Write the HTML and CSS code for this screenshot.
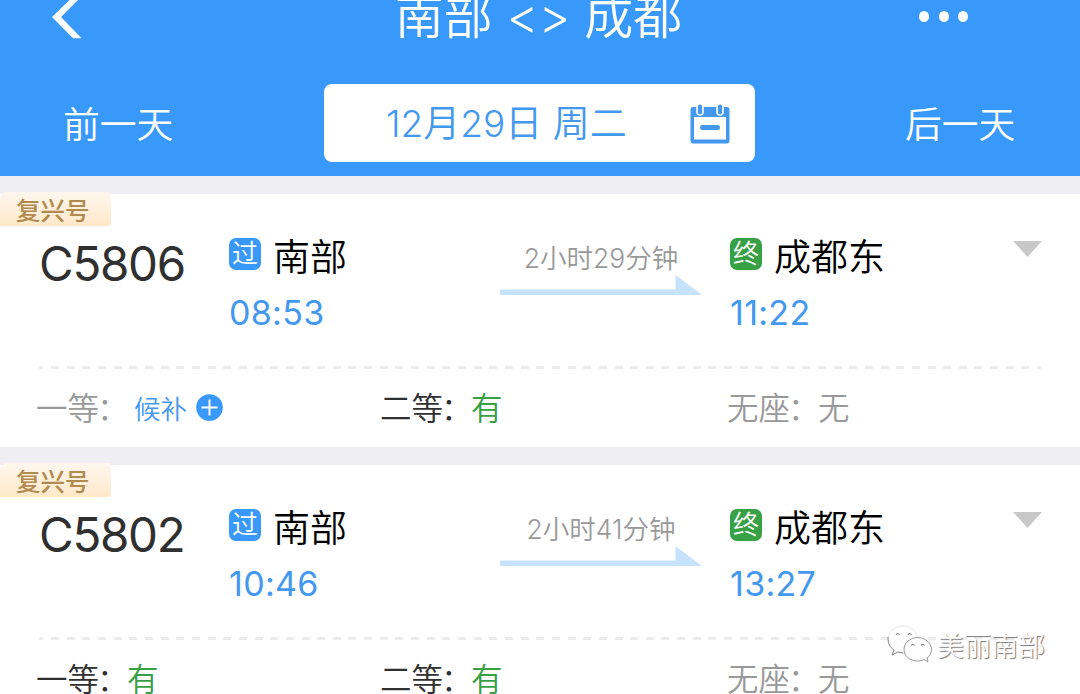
FILE: index.html
```html
<!DOCTYPE html>
<html lang="zh-CN">
<head>
    <meta charset="UTF-8">
    <meta name="viewport" content="width=device-width, initial-scale=1.0">
    <title>南部 - 成都</title>
    <link rel="stylesheet" href="styles.css">
</head>
<body>
    <header class="header">
        <div class="title-bar">
            <svg class="back" width="34" height="40" viewBox="0 0 34 40">
                <path d="M19.500 0H28L11 17L31.500 38.300H23L2 17Z" fill="#fff"/>
            </svg>
            <h1 class="title">南部 &lt;&gt; 成都</h1>
            <div class="more"><i></i><i></i><i></i></div>
        </div>
        <div class="date-bar">
            <span class="day">前一天</span>
            <div class="date-box">
                <span class="date">12月29日 周二</span>
                <svg class="calendar" width="40" height="40" viewBox="0 0 40 40">
                    <path fill="#4398f0" fill-rule="evenodd" d="M3 3H37Q39.5 3 39.5 6V36Q39.5 39.500 37 39.500H3Q.5 39.500 .5 36V6Q.5 3 3 3ZM4 13V35.500H36V13Z"/>
                    <path d="M10 3V8M30 3V8" stroke="#fff" stroke-width="7.500" stroke-linecap="round"/>
                    <path d="M10 2.500V8.500M30 2.500V8.500" stroke="#4398f0" stroke-width="4.200" stroke-linecap="round"/>
                    <path d="M12.500 23.500H27.500" stroke="#4398f0" stroke-width="5" stroke-linecap="round"/>
                </svg>
            </div>
            <span class="day">后一天</span>
        </div>
    </header>

    <main class="list">
        <section class="card">
            <span class="tag">复兴号</span>
            <div class="trip">
                <div class="train">C5806</div>
                <div class="stop">
                    <div class="station"><b class="badge pass">过</b>南部</div>
                    <div class="time">08:53</div>
                </div>
                <div class="duration">
                    <span>2小时29分钟</span>
                    <svg width="202" height="20" viewBox="0 0 202 20"><path d="M0 14.500H175.500V0L202 20H0Z" fill="#c7e2ff"/></svg>
                </div>
                <div class="stop">
                    <div class="station"><b class="badge end">终</b>成都东</div>
                    <div class="time">11:22</div>
                </div>
                <i class="toggle"></i>
            </div>
            <div class="seats">
                <div class="seat muted"><span class="label">一等<i>：</i></span><span class="waitlist">候补</span>
                    <svg class="plus" width="27" height="27" viewBox="0 0 27 27"><circle cx="13.500" cy="13.500" r="13.300" fill="#3899fb"/><path d="M5.500 13.500H21.500M13.500 5.500V21.500" stroke="#fff" stroke-width="2"/></svg>
                </div>
                <div class="seat"><span class="label">二等<i>：</i></span><span class="yes">有</span></div>
                <div class="seat muted"><span class="label">无座<i>：</i></span><span>无</span></div>
            </div>
        </section>

        <section class="card">
            <span class="tag">复兴号</span>
            <div class="trip">
                <div class="train">C5802</div>
                <div class="stop">
                    <div class="station"><b class="badge pass">过</b>南部</div>
                    <div class="time">10:46</div>
                </div>
                <div class="duration">
                    <span>2小时41分钟</span>
                    <svg width="202" height="20" viewBox="0 0 202 20"><path d="M0 14.500H175.500V0L202 20H0Z" fill="#c7e2ff"/></svg>
                </div>
                <div class="stop">
                    <div class="station"><b class="badge end">终</b>成都东</div>
                    <div class="time">13:27</div>
                </div>
                <i class="toggle"></i>
            </div>
            <div class="seats">
                <div class="seat"><span class="label">一等<i>：</i></span><span class="yes">有</span></div>
                <div class="seat"><span class="label">二等<i>：</i></span><span class="yes">有</span></div>
                <div class="seat muted"><span class="label">无座<i>：</i></span><span>无</span></div>
            </div>
        </section>
    </main>

    <div class="watermark">
        <svg width="46" height="40" viewBox="0 0 46 40">
            <g fill="#fff" stroke-width="1">
                <path d="M16 1C7 1 1 7 1 14.500C1 19 3.300 22.500 7 25L5 30L11 27C14 28.300 20 28 22 27C32 23 33 13 28 6.500C25 3 21 1 16 1Z" stroke="#e4e4e4"/>
                <path d="M1 12C1 19 3 22.500 7 25L5 30L11 27L16 28" fill="none" stroke="#888"/>
                <path d="M30.500 12.500C23 12.500 17 18 17 24.500C17 31 23 36 30.500 36C33 36 35 35.500 37 34.500L41 37L40 33C43 31 44.500 28 44.500 24.500C44.500 18 38 12.500 30.500 12.500Z" stroke="#999"/>
            </g>
            <path d="M9 10Q10.500 7 12.500 10M21 10Q22.500 7 24.500 10M24 20.500Q25.500 18 27.500 20.500M34 20.500Q35.500 18 37.500 20.500" fill="none" stroke="#888" stroke-width="1.200"/>
        </svg>
        <span>美丽南部</span>
    </div>
</body>
</html>
```
FILE: styles.css
```css
* {
    box-sizing: border-box;
}

body {
    margin: 0;
    height: 694px;
    overflow: hidden;
    position: relative;
    background: #eeeef3;
    color: #303030;
    font-family: Inter, "Noto Sans CJK SC", sans-serif;
    font-weight: 350;
}

.header {
    height: 176px;
    background: #3899fb;
    color: #fff;
    overflow: hidden;
}

.title-bar {
    height: 84px;
    padding: 0 112px 0 50px;
    display: flex;
    justify-content: space-between;
    align-items: flex-start;
}

.title {
    margin: -18px 0 0 74px;
    font-size: 49px;
    line-height: 70px;
    font-weight: 350;
    white-space: nowrap;
}

.more {
    display: flex;
    gap: 9.5px;
    padding-top: 11px;
}

.more i {
    width: 10px;
    height: 11px;
    border-radius: 50%;
    background: #fff;
}

.date-bar {
    display: flex;
    justify-content: space-between;
    align-items: center;
    padding: 0 64px 0 63px;
}

.day {
    width: 111px;
    height: 78px;
    font-size: 36.8px;
    line-height: 81px;
    white-space: nowrap;
}

.date-box {
    width: 431px;
    height: 78px;
    padding: 0 25px 0 62px;
    display: flex;
    align-items: center;
    justify-content: space-between;
    background: #fff;
    border-radius: 8px;
}

.date {
    margin-top: -4px;
    color: #4398f0;
    font-size: 37px;
    white-space: nowrap;
}

.calendar {
    margin-top: 2px;
}

.list {
    padding-top: 18px;
}

.card {
    position: relative;
    height: 253px;
    margin-bottom: 18px;
    background: #fff;
}

.card:last-child {
    height: 229px;
    margin-bottom: 0;
}

.tag {
    position: absolute;
    left: 0;
    top: -2px;
    width: 111px;
    height: 34px;
    padding-left: 16px;
    border-radius: 8px 3px 3px 0;
    background: linear-gradient(#fff7ef, #ffe8c8);
    color: #b18a4d;
    font-size: 24.5px;
    font-weight: 500;
    line-height: 38px;
}

.trip {
    height: 172px;
    padding: 40px 38px 0 39px;
    display: grid;
    grid-template-columns: 190px 271px 230px 283px 29px;
    align-items: start;
}

.train {
    padding-top: 1px;
    font-size: 47.5px;
    line-height: 58px;
    font-weight: 400;
    letter-spacing: -1.3px;
}

.station {
    display: flex;
    align-items: center;
    height: 46px;
    color: #000;
    font-size: 37px;
    line-height: 46px;
    padding-top: 2px;
    white-space: nowrap;
}

.badge {
    width: 32px;
    height: 32px;
    margin: -8px 12px 0 0;
    border-radius: 7px;
    color: #fff;
    font-size: 26px;
    line-height: 32px;
    font-weight: 350;
    text-align: center;
}

.pass {
    background: #3899fb;
}

.end {
    background: #38a045;
}

.time {
    margin-top: 12px;
    color: #4398f0;
    font-size: 34px;
    line-height: 42px;
    font-weight: 400;
    letter-spacing: 0.3px;
}

.duration {
    width: 202px;
    padding-top: 5px;
    color: #999;
    font-size: 26.5px;
    text-align: center;
}

.duration span {
    display: block;
    height: 36px;
    line-height: 39px;
}

.duration svg {
    display: block;
}

.toggle {
    margin-top: 7px;
    width: 29px;
    height: 16px;
    background: #c8c8c8;
    clip-path: polygon(0 0, 100% 0, 50% 100%);
}

.seats {
    margin: 0 39px 0 36px;
    padding-top: 3px;
    display: grid;
    grid-template-columns: 344px 347px auto;
    background: linear-gradient(#fff, #fff) 0 0 / 3px 3px no-repeat,
        repeating-linear-gradient(90deg, #ececec 0 8px, transparent 8px 15.65px) -0.5px 0 / 1200px 3px no-repeat;
    font-size: 31.5px;
}

.seat {
    display: flex;
    align-items: center;
    height: 76px;
    padding-top: 3px;
    line-height: 42px;
}

.label {
    width: 91px;
    white-space: nowrap;
}

.label i {
    margin-left: -2px;
    font-style: normal;
}

.muted {
    color: #999;
}

.yes {
    color: #38a045;
}

.waitlist {
    margin: 0 9px 0 7px;
    color: #4398f0;
    font-size: 26.5px;
}

.plus {
    margin-top: -2px;
}

.watermark {
    position: absolute;
    left: 887px;
    top: 625px;
    display: flex;
    gap: 4px;
    color: #fff;
    font-size: 27px;
    line-height: 43px;
    text-shadow: 1px 1px 1px #777;
}
```
